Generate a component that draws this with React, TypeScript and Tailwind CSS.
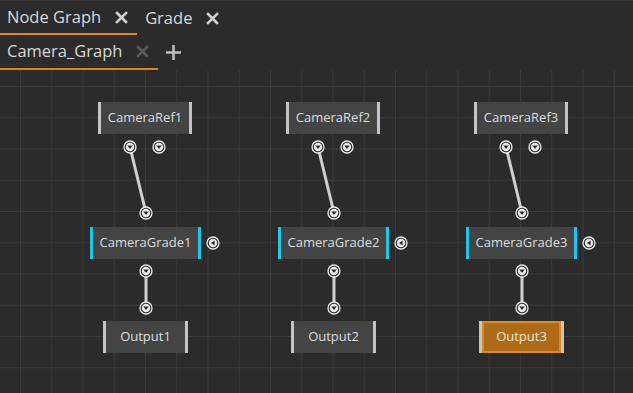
const COL = 188;

type NodeProps = {
  x: number;
  y: number;
  w: number;
  label: string;
  bar: string;
  active?: boolean;
};

function Node({ x, y, w, label, bar, active }: NodeProps) {
  return (
    <div
      className="absolute flex h-[32px] items-stretch"
      style={{ left: x, top: y, width: w }}
    >
      <div className={`w-[3px] ${bar}`} />
      <div
        className={
          active
            ? "flex flex-1 items-center justify-center border-2 border-[#dc8b20] bg-[#ad6b19] text-[13px] text-[#f3e6d2]"
            : "flex flex-1 items-center justify-center bg-[#444444] text-[13px] text-[#dddddd]"
        }
      >
        {label}
      </div>
      <div className={`w-[3px] ${bar}`} />
    </div>
  );
}

function Port({ x, y, dir = "down" }: { x: number; y: number; dir?: "down" | "left" }) {
  const tri = dir === "down" ? "4.3,5.6 9.7,5.6 7,9" : "5,7 8.6,4.6 8.6,9.4";
  return (
    <svg
      className="absolute"
      width="14"
      height="14"
      viewBox="0 0 14 14"
      style={{ left: x - 7, top: y - 7 }}
    >
      <circle cx="7" cy="7" r="6" fill="#2b2b2b" stroke="#ececec" strokeWidth="1.3" />
      <circle cx="7" cy="7" r="4.2" fill="#ececec" />
      <polygon points={tri} fill="#2b2b2b" />
    </svg>
  );
}

function Close({ color }: { color: string }) {
  return (
    <svg width="13" height="13" viewBox="0 0 13 13">
      <path d="M2 2 L11 11 M11 2 L2 11" stroke={color} strokeWidth="2.6" strokeLinecap="square" />
    </svg>
  );
}

const columns = [
  { n: 1, active: false },
  { n: 2, active: false },
  { n: 3, active: true },
];

export default function App() {
  return (
    <div
      className="flex h-[393px] w-[633px] flex-col overflow-hidden border-t border-[#3a3a3a] bg-[#2b2b2b] text-[#d9d9d9]"
      style={{ fontFamily: '"Open Sans", "Noto Sans", sans-serif' }}
    >
      <div className="flex h-[34px] items-end">
        <div className="flex h-full items-center gap-[14px] border-b-2 border-[#d98a1c] pl-[7px] pr-[9px] text-[16.5px]">
          <span>Node Graph</span>
          <Close color="#cfcfcf" />
        </div>
        <div className="flex h-full items-center gap-[14px] pl-[8px] pr-[10px] text-[16.5px]">
          <span>Grade</span>
          <Close color="#cfcfcf" />
        </div>
      </div>
      <div className="flex h-[35px] items-center">
        <div className="flex h-full items-center gap-[14px] border-b-2 border-[#d98a1c] pl-[7px] pr-[9px] text-[16.5px]">
          <span>Camera_Graph</span>
          <Close color="#5a5a5a" />
        </div>
        <svg className="ml-[7px]" width="17" height="17" viewBox="0 0 17 17">
          <path d="M8.5 1 V16 M1 8.5 H16" stroke="#bdbdbd" strokeWidth="2.6" />
        </svg>
      </div>
      <div className="relative flex-1 bg-[linear-gradient(to_right,#3a3a3a_1px,transparent_1px),linear-gradient(to_bottom,#3a3a3a_1px,transparent_1px)] bg-size-[31.25px_31.25px] bg-position-[20px_16px]">
        <svg className="absolute left-0 top-0" width="633" height="323">
          {columns.map(({ n }, i) => (
            <g key={n} stroke="#cfcfcf" strokeWidth="3" strokeLinecap="round">
              <line x1={130 + i * COL} y1={77} x2={146 + i * COL} y2={143} />
              <line x1={146 + i * COL} y1={201} x2={146 + i * COL} y2={238} />
            </g>
          ))}
        </svg>
        {columns.map(({ n, active }, i) => {
          const o = i * COL;
          return (
            <div key={n}>
              <Node x={98 + o} y={32} w={94} label={`CameraRef${n}`} bar="bg-[#c4c4c4]" />
              <Port x={130 + o} y={77} />
              <Port x={159 + o} y={77} />
              <Port x={146 + o} y={143} />
              <Node x={90 + o} y={157} w={111} label={`CameraGrade${n}`} bar="bg-[#1ec6ec]" />
              <Port x={213 + o} y={173} dir="left" />
              <Port x={146 + o} y={201} />
              <Port x={146 + o} y={238} />
              <Node
                x={103 + o}
                y={251}
                w={85}
                label={`Output${n}`}
                bar="bg-[#c4c4c4]"
                active={active}
              />
            </div>
          );
        })}
      </div>
    </div>
  );
}
